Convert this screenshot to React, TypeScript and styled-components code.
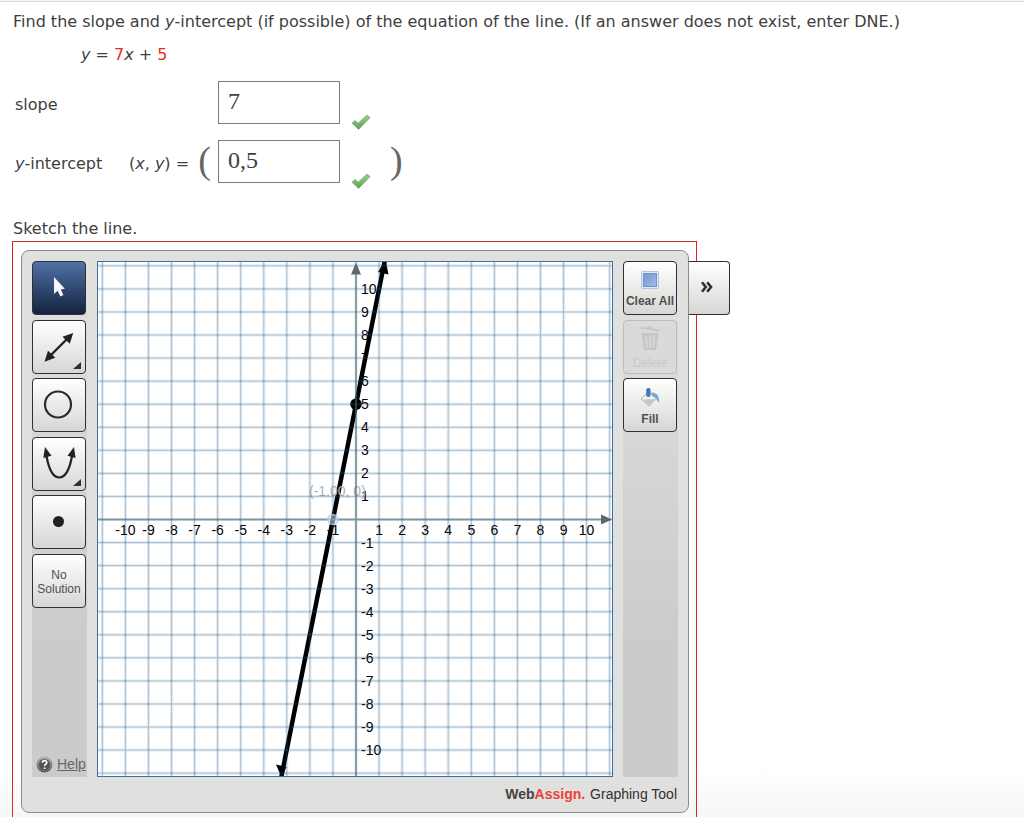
import React, { useState } from "react";
import styled, { createGlobalStyle, css } from "styled-components";

const GlobalStyle = createGlobalStyle`
  *, *::before, *::after { box-sizing: border-box; }
  body {
    margin: 0;
    background: #fff;
    color: #404040;
    font-family: Verdana, "DejaVu Sans", sans-serif;
    font-size: 16px;
    line-height: 20px;
  }
`;

const Page = styled.div`
  display: flex;
  flex-direction: column;
  min-height: 100vh;
  background: linear-gradient(to top, #f6f6f6, #fff 48px);
`;

const TopRule = styled.div`
  height: 2px;
  background: #f4f4f4;
  border-bottom: 1px solid #dcdcdc;
`;

const Question = styled.main`
  flex: 1;
  display: flex;
  flex-direction: column;
  padding: 10px 12px 0;
`;

const Prompt = styled.p`
  margin: 0;
  padding-left: 1px;
`;

const Equation = styled.p`
  margin: 13px 0 0;
  padding-left: 69px;
`;

const Value = styled.span`
  color: #f0281c;
`;

const Answers = styled.form`
  display: flex;
  flex-direction: column;
  gap: 16px;
  margin: 16px 0 36px;
  padding-left: 3px;
`;

const AnswerRow = styled.div`
  display: flex;
  align-items: center;
  height: 43px;
`;

const AnswerLabel = styled.label`
  width: 114px;
  padding-top: 4px;
`;

const Lead = styled.div`
  display: flex;
  align-items: center;
  justify-content: space-between;
  width: 89px;
  padding-right: 7px;
`;

const Coordinates = styled.span`
  padding-top: 4px;
`;

const Paren = styled.span`
  padding-bottom: 4px;
  font-family: "Liberation Serif", serif;
  font-size: 38px;
  line-height: 40px;
  color: #666;
`;

const AnswerInput = styled.input`
  width: 122px;
  height: 43px;
  padding: 0 9px 2px;
  border: 1px solid #7c7c7c;
  border-radius: 0;
  background: #fff;
  color: #404040;
  font-family: "Liberation Serif", serif;
  font-size: 24px;
`;

const Mark = styled.span`
  align-self: flex-end;
  width: 50px;
  height: 18px;
  padding-left: 11px;
  transform: translateY(8px);

  svg { display: block; }
`;

const Frame = styled.section`
  flex: 1;
  width: 100%;
  max-width: 685px;
  margin-top: 2px;
  padding: 8px 7px 4px 8px;
  border: 1px solid #d9281e;
  border-bottom: 0;
`;

const Tool = styled.div`
  position: relative;
  padding: 10px;
  border: 1px solid #8c8c8c;
  border-radius: 8px;
  background: #e0e0de;
`;

const Workspace = styled.div`
  display: flex;
  gap: 10px;
`;

const Rail = styled.div`
  display: flex;
  flex-direction: column;
  justify-content: space-between;
  flex: none;
  width: 55px;
  background: linear-gradient(#e0e0de, #cbcbcb 75%);
`;

const ButtonStack = styled.div<{ $height: number }>`
  display: flex;
  flex-direction: column;
  justify-content: space-between;
  height: ${(p) => p.$height}px;
`;

const ToolButton = styled.button<{ $bold?: boolean }>`
  position: relative;
  display: flex;
  flex-direction: column;
  align-items: center;
  justify-content: center;
  gap: 5px;
  width: 54px;
  height: 54px;
  padding: 2px 0 0;
  border: 1px solid #303030;
  border-radius: 4px;
  background: linear-gradient(#fff, #d6d6d4);
  color: #505050;
  font-family: "Liberation Sans", Arial, sans-serif;
  font-size: 12px;
  font-weight: ${(p) => (p.$bold ? 700 : 400)};
  line-height: 14px;
  white-space: nowrap;

  svg { display: block; }

  &[aria-pressed="true"] {
    background: linear-gradient(#4f71a6, #12233f);
  }

  &:disabled {
    border-color: #bcbcbc;
    background: #dadad9;
    color: #c8c8c8;
  }
`;

const IconButton = styled(ToolButton)`
  padding: 0;
`;

const ExpandButton = styled(ToolButton)`
  position: absolute;
  top: 10px;
  left: 100%;
  width: 42px;
  padding: 0 5px 2px 0;
  border-left-color: #8c8c8c;
  border-radius: 0 4px 4px 0;
`;

const Canvas = styled.div`
  flex: 1;
  min-width: 0;
  border: 1px solid #3d6ea8;
  background: #fff;

  svg {
    display: block;
    width: 100%;
    height: auto;
  }
`;

const axisText = css`
  font-family: "Liberation Sans", Arial, sans-serif;
  font-size: 14px;
`;

const Tick = styled.text`
  ${axisText}
  fill: #000;
`;

const PointReadout = styled.text`
  ${axisText}
  fill: #b2b2b2;
`;

const HelpLink = styled.a`
  display: flex;
  align-items: center;
  gap: 4px;
  padding: 0 0 4px 4px;
  color: #666;
  font-family: "Liberation Sans", Arial, sans-serif;
  font-size: 14px;
  line-height: 18px;
`;

const Brand = styled.footer`
  padding: 9px 1px 0 0;
  text-align: right;
  color: #303030;
  font-family: "Liberation Sans", Arial, sans-serif;
  font-size: 14px;
  line-height: 16px;
`;

const BrandName = styled.b`
  color: #444;
  margin-right: 1px;

  em {
    color: #ea4335;
    font-style: normal;
  }
`;

const CheckMark = ({ id }: { id: string }) => (
  <svg width="20" height="17" viewBox="0 0 20 17" role="img" aria-label="Correct">
    <defs>
      <linearGradient id={id} x1="0" y1="0" x2="0" y2="1">
        <stop offset="0" stopColor="#9ad08a" />
        <stop offset="1" stopColor="#5f9e55" />
      </linearGradient>
    </defs>
    <path d="M1 9.2 4 6.6 7.2 9.2 16 1.2 19 3.600 7.600 15.400Z" fill={`url(#${id})`} stroke="#7fb672" strokeWidth="1" strokeLinejoin="round" />
  </svg>
);

const Corner = styled.svg`
  position: absolute;
  right: 4px;
  bottom: 4px;
`;

const CornerMark = () => (
  <Corner width="8" height="7" viewBox="0 0 8 7" aria-hidden="true">
    <path d="M8 0V7H0Z" fill="#303030" />
  </Corner>
);

const PointerIcon = () => (
  <svg width="52" height="52" viewBox="0 0 52 52" aria-hidden="true">
    <path d="M21 15V32L24.600 28.800 27.400 34.500 30.400 33 27.800 27.400 31.800 26.800Z" fill="#f4f6fa" />
  </svg>
);

const LineIcon = () => (
  <svg width="52" height="52" viewBox="0 0 52 52" aria-hidden="true">
    <path d="M16 36 36 16" stroke="#222" strokeWidth="2.400" />
    <path d="M40.200 12 36.800 22.800 29.500 15.800ZM11.500 40.800 15 29.800 22.300 36.800Z" fill="#222" />
  </svg>
);

const CircleIcon = () => (
  <svg width="52" height="52" viewBox="0 0 52 52" aria-hidden="true">
    <circle cx="25" cy="25.500" r="13" fill="none" stroke="#2a2a2a" strokeWidth="2.200" />
  </svg>
);

const ParabolaIcon = () => (
  <svg width="52" height="52" viewBox="0 0 52 52" aria-hidden="true">
    <path d="M13.500 18C16 32 20.500 39.500 26.200 39.500S36.500 32 39 18" fill="none" stroke="#222" strokeWidth="2.200" />
    <path d="M12 9 18.500 17.800 10.300 20ZM41 9 42.500 20 34.500 17.800Z" fill="#222" />
  </svg>
);

const DotIcon = () => (
  <svg width="52" height="52" viewBox="0 0 52 52" aria-hidden="true">
    <circle cx="25.500" cy="25.500" r="5.500" fill="#222" />
  </svg>
);

const ClearIcon = () => (
  <svg width="18" height="18" viewBox="0 0 18 18" aria-hidden="true">
    <defs>
      <linearGradient id="clear" x1="0" y1="0" x2="1" y2="1">
        <stop offset="0" stopColor="#7397d4" />
        <stop offset="1" stopColor="#a3bbe8" />
      </linearGradient>
    </defs>
    <rect x="0.500" y="0.500" width="17" height="17" rx="1" fill="#dfe8f7" stroke="#b3c3e0" />
    <rect x="2.500" y="2.500" width="13" height="13" fill="url(#clear)" stroke="#6f92cf" />
  </svg>
);

const TrashIcon = () => (
  <svg width="22" height="26" viewBox="0 0 22 26" aria-hidden="true">
    <path d="M1.500 2.500 20 5.500" stroke="#c6c6c6" strokeWidth="2" />
    <path d="M9 2.500 13 3" stroke="#c6c6c6" strokeWidth="3" />
    <path d="M2.500 8H19.500L17 25H5Z" fill="#c6c6c6" />
    <path d="M6.800 10.500 8 22.500M11 10.500V22.500M15.200 10.500 14 22.500" stroke="#dadad9" strokeWidth="1.600" />
  </svg>
);

const FillIcon = () => (
  <svg width="20" height="20" viewBox="0 0 20 20" aria-hidden="true">
    <path d="M1 12 9 4.500 16 11.500 9 19Z" fill="#f0f0f0" stroke="#b0b0b0" />
    <path d="M3 12.500 15 12 9 18Z" fill="#c4c4c4" />
    <path d="M11.500 5.500C16 5 19.800 8.500 19 15.500 17 14 16.500 10.500 12 9Z" fill="#7ea6cf" />
    <rect x="6.200" y="1" width="4.400" height="9" rx="2" fill="#3f78b8" />
  </svg>
);

const ChevronsIcon = () => (
  <svg width="14" height="12" viewBox="0 0 14 12" aria-hidden="true">
    <path d="M2 1.200 5.800 6 2 10.800M7.200 1.200 11 6 7.200 10.800" fill="none" stroke="#303030" strokeWidth="2.600" />
  </svg>
);

const HelpIcon = () => (
  <svg width="17" height="17" viewBox="0 0 17 17" aria-hidden="true">
    <defs>
      <linearGradient id="ring" x1="0" y1="0" x2="0" y2="1">
        <stop offset="0" stopColor="#b4b4b4" />
        <stop offset="1" stopColor="#5c5c5c" />
      </linearGradient>
    </defs>
    <circle cx="8.500" cy="8.500" r="8" fill="url(#ring)" />
    <circle cx="8.500" cy="8.500" r="5.600" fill="#555" />
    <path d="M6.400 6.800C6.400 4 10.800 4 10.800 6.600 10.800 8.200 8.600 8 8.600 10M8.600 11.400V13" fill="none" stroke="#fff" strokeWidth="1.700" />
  </svg>
);

const UNIT = 23.06;
const steps = Array.from({ length: 23 }, (_, i) => i - 11);
const labelled = steps.filter((n) => n !== 0 && Math.abs(n) <= 10);

const Graph = () => (
  <svg viewBox="-258 -257.5 514 514" role="img" aria-label="Graph of y = 7x + 5">
    <g fill="#000">
      <circle cx="0" cy={-5 * UNIT} r="5.800" />
      <path d="M29.500 -260 32.500 -245 22 -247.500Z" />
      <path d="M-74.800 257 -80 245 -69.500 247.500Z" />
    </g>
    <path d={`M28.600 -258 L${-UNIT} 0 L-74.600 257`} fill="none" stroke="#000" strokeWidth="4.500" />
    {labelled.map((n) => (
      <Tick key={`x${n}`} x={n * UNIT} y="15" textAnchor="middle">{n}</Tick>
    ))}
    {labelled.map((n) => (
      <Tick key={`y${n}`} x="5" y={5 - n * UNIT}>{n}</Tick>
    ))}
    <PointReadout x="-47" y="-24">(-1.00, 0)</PointReadout>
    {steps.map((n) => (
      <g key={n} stroke="#1f5f8b">
        <path d={`M${n * UNIT} -258V258M-258 ${-n * UNIT}H258`} strokeWidth="3" strokeOpacity="0.13" />
        <path d={`M${n * UNIT} -258V258M-258 ${-n * UNIT}H258`} strokeWidth="1" strokeOpacity="0.28" />
      </g>
    ))}
    <path d="M0 -250V258M-258 0H250" stroke="#4d666e" strokeWidth="2" strokeOpacity="0.5" />
    <path d="M0 -257 5 -245H-5ZM256 0 245 -5V5Z" fill="#5d686c" />
    <circle cx={-UNIT} cy="0" r="5" fill="#dbe6fb" fillOpacity="0.5" stroke="#b3caf5" strokeWidth="1.500" strokeOpacity="0.800" />
  </svg>
);

const tools = [
  { name: "Pointer", icon: <PointerIcon /> },
  { name: "Line", icon: <><LineIcon /><CornerMark /></> },
  { name: "Circle", icon: <CircleIcon /> },
  { name: "Parabola", icon: <><ParabolaIcon /><CornerMark /></> },
  { name: "Point", icon: <DotIcon /> },
];

export default function App() {
  const [slope, setSlope] = useState("7");
  const [intercept, setIntercept] = useState("0,5");
  const [active, setActive] = useState("Pointer");

  return (
    <>
      <GlobalStyle />
      <Page>
        <TopRule />
        <Question>
          <Prompt>
            Find the slope and <i>y</i>-intercept (if possible) of the equation of the line. (If an answer does not exist, enter DNE.)
          </Prompt>
          <Equation>
            <i>y</i> = <Value>7</Value><i>x</i> + <Value>5</Value>
          </Equation>
          <Answers>
            <AnswerRow>
              <AnswerLabel htmlFor="slope">slope</AnswerLabel>
              <Lead />
              <AnswerInput id="slope" value={slope} onChange={(e) => setSlope(e.target.value)} />
              <Mark><CheckMark id="slope-mark" /></Mark>
            </AnswerRow>
            <AnswerRow>
              <AnswerLabel htmlFor="intercept"><i>y</i>-intercept</AnswerLabel>
              <Lead>
                <Coordinates>(<i>x</i>, <i>y</i>) =</Coordinates>
                <Paren>(</Paren>
              </Lead>
              <AnswerInput id="intercept" value={intercept} onChange={(e) => setIntercept(e.target.value)} />
              <Mark><CheckMark id="intercept-mark" /></Mark>
              <Paren>)</Paren>
            </AnswerRow>
          </Answers>
          <Prompt>Sketch the line.</Prompt>
          <Frame>
            <Tool>
              <Workspace>
                <Rail>
                  <ButtonStack $height={347}>
                    {tools.map((t) => (
                      <IconButton key={t.name} type="button" aria-label={t.name} aria-pressed={active === t.name} onClick={() => setActive(t.name)}>
                        {t.icon}
                      </IconButton>
                    ))}
                    <ToolButton type="button"><span>No<br />Solution</span></ToolButton>
                  </ButtonStack>
                  <HelpLink href="#help"><HelpIcon />Help</HelpLink>
                </Rail>
                <Canvas><Graph /></Canvas>
                <Rail>
                  <ButtonStack $height={171}>
                    <ToolButton type="button" $bold><ClearIcon />Clear All</ToolButton>
                    <ToolButton type="button" disabled><TrashIcon />Delete</ToolButton>
                    <ToolButton type="button" $bold><FillIcon />Fill</ToolButton>
                  </ButtonStack>
                </Rail>
              </Workspace>
              <Brand><BrandName>Web<em>Assign.</em></BrandName> Graphing Tool</Brand>
              <ExpandButton type="button" aria-label="Expand"><ChevronsIcon /></ExpandButton>
            </Tool>
          </Frame>
        </Question>
      </Page>
    </>
  );
}
